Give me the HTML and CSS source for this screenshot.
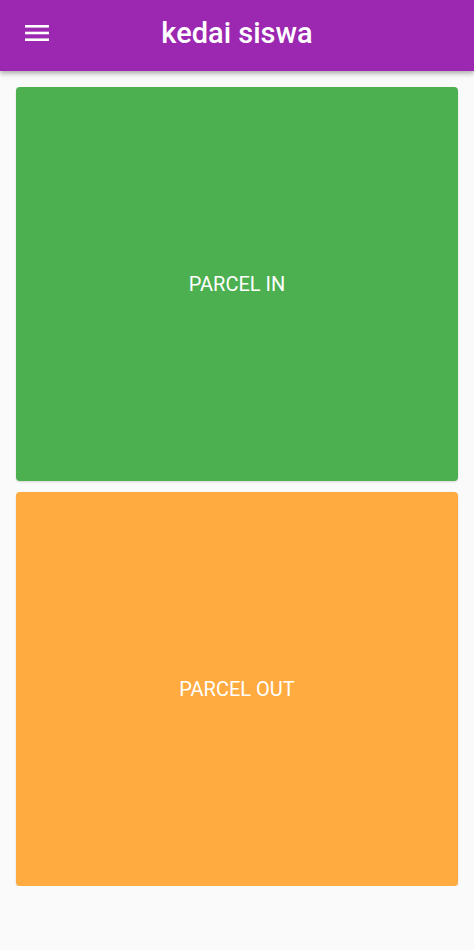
FILE: index.html
```html
<!DOCTYPE html>
<html>
<head>
<meta charset="utf-8">
<link rel="stylesheet" href="styles.css">
</head>
<body>
<header class="appbar">
  <button class="menu" aria-label="menu">
    <svg width="24" height="16" viewBox="0 0 24 16"><rect x="0" y="0" width="24" height="2.6" fill="#fff"/><rect x="0" y="6.7" width="24" height="2.6" fill="#fff"/><rect x="0" y="13.4" width="24" height="2.6" fill="#fff"/></svg>
  </button>
  <h1 class="title">kedai siswa</h1>
</header>
<main class="content">
  <div class="tile tile-in">PARCEL IN</div>
  <div class="tile tile-out">PARCEL OUT</div>
</main>
</body>
</html>
```
FILE: styles.css
```css
html, body {
  margin: 0;
  padding: 0;
  background: #fafafa;
  font-family: Roboto, "Noto Sans", sans-serif;
}
.appbar {
  height: 71px;
  box-sizing: border-box;
  padding-bottom: 5px;
  background: #9c27b0;
  display: flex;
  align-items: center;
  box-shadow: 0 2px 4px rgba(0,0,0,0.22), 0 4px 5px rgba(0,0,0,0.1);
  position: relative;
}
.menu {
  background: none;
  border: 0;
  padding: 0;
  margin-left: 25px;
  width: 24px;
  height: 16px;
  display: flex;
}
.title {
  flex: 1;
  margin: 0 49px 0 0;
  text-align: center;
  color: #fff;
  font-size: 29px;
  font-weight: 500;
}
.content {
  padding: 16px 16px 0;
  display: flex;
  flex-direction: column;
  gap: 11px;
}
.tile {
  height: 394px;
  border-radius: 4px;
  display: flex;
  align-items: center;
  justify-content: center;
  color: #fff;
  font-size: 20px;
  box-shadow: 0 1px 2px rgba(0,0,0,0.15);
}
.tile-in { background: #4caf50; }
.tile-out { background: #ffab40; }
```
